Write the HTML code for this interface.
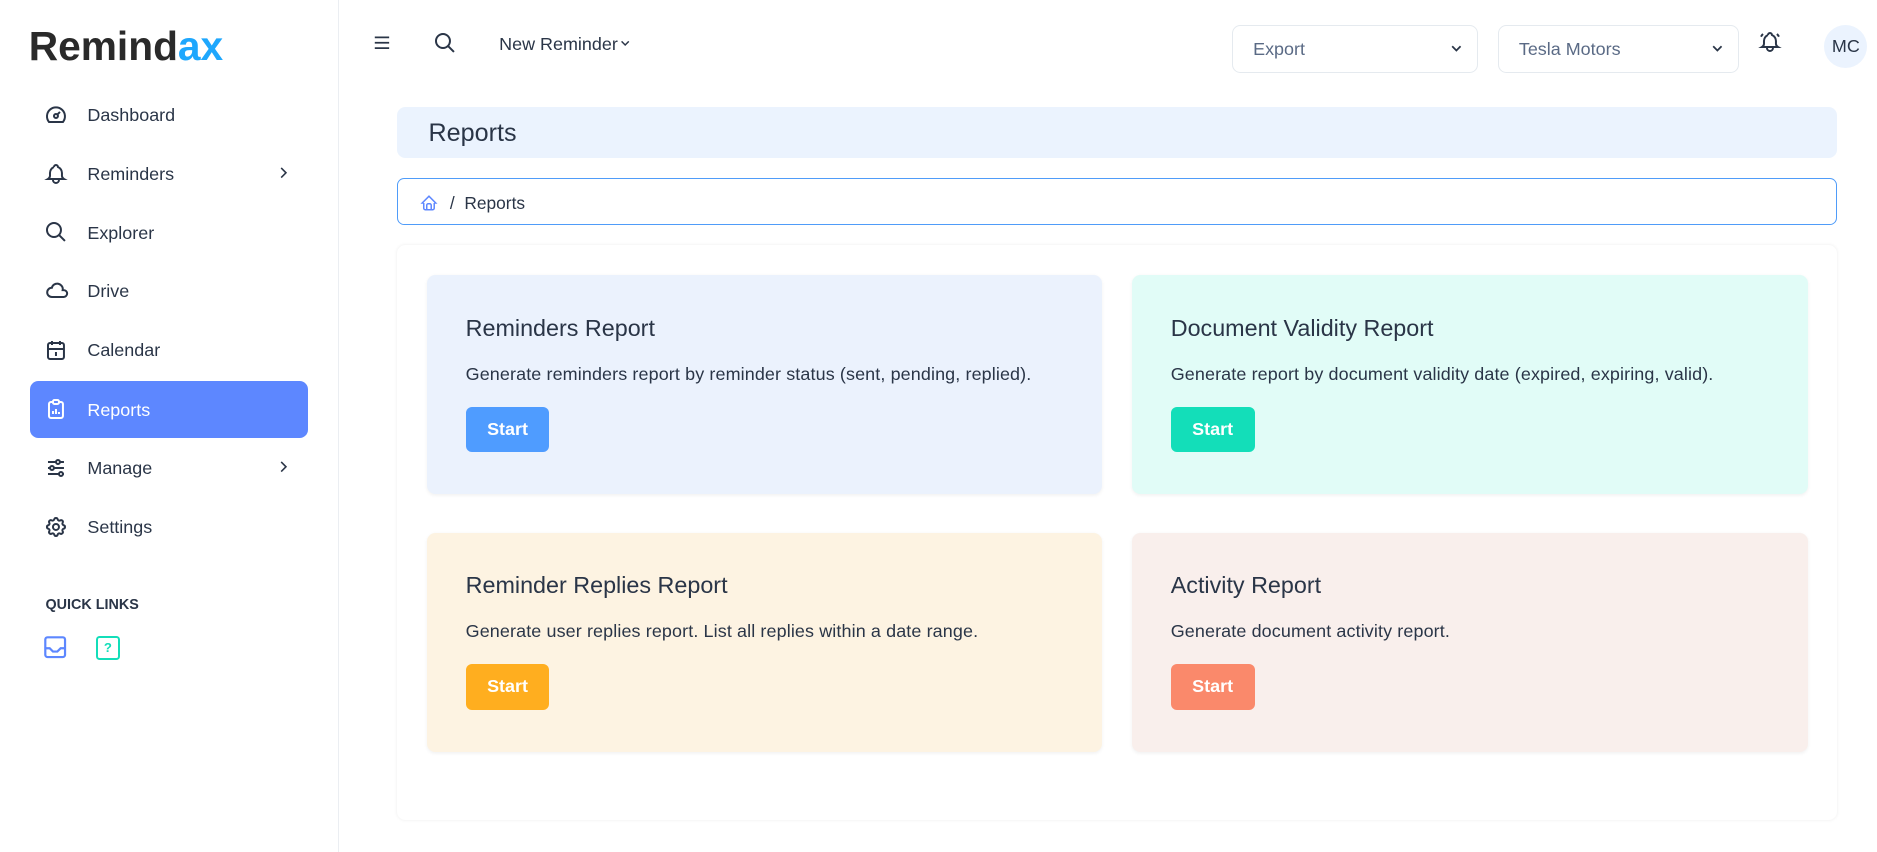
<!DOCTYPE html>
<html><head><meta charset="utf-8"><style>
html,body{margin:0;padding:0;background:#fff;overflow:hidden}
#w{width:1568px;height:712px;zoom:1.19707;position:relative;font-family:"Liberation Sans",sans-serif;color:#2a3547}
.side{position:absolute;left:0;top:0;width:282px;height:712px;border-right:1px solid #ebeef2;background:#fff}
.logo{position:absolute;left:24px;top:19px;font-size:34px;font-weight:bold;letter-spacing:0;color:#2a2a2a}
.logo span{color:#1ea7fd}
.nav{position:absolute;left:25px;width:232px;height:48px;border-radius:7px;font-size:15px;color:#2a3547}
.nav svg{position:absolute;left:12px;top:14px}
.nav .t{position:absolute;left:48px;top:16px}
.nav .ch{position:absolute;right:14px;top:14px}
.nav.act{background:#5d87ff;color:#fff}
.ql{position:absolute;left:38px;top:499px;font-size:12px;font-weight:bold;color:#2a3547}
.top{position:absolute;left:283px;top:0;right:0;height:80px}
.sel{position:absolute;top:21px;height:38px;border:1px solid #e5eaef;border-radius:7px;background:#fff;font-size:15px;color:#5a6a85}
.sel .t{position:absolute;left:17px;top:11px}
.sel svg{position:absolute;right:10px;top:12px}
.hd{position:absolute;left:332px;top:89px;width:1203px;height:43px;background:#ebf3fe;border-radius:7px}
.hd div{position:absolute;left:26px;top:10px;font-size:21px;color:#2a3547}
.bc{position:absolute;left:332px;top:149px;width:1201px;height:37px;border:1px solid #4f9cf9;border-radius:6px;font-size:14.5px}
.panel{position:absolute;left:332px;top:205px;width:1203px;height:480px;border-radius:7px;box-shadow:0 0 3px rgba(0,0,0,0.08);background:#fff}
.card{position:absolute;width:564px;height:183px;border-radius:7px;box-shadow:0 1px 3px rgba(0,0,0,0.06)}
.card h3{position:absolute;left:32px;top:33px;margin:0;font-weight:normal;font-size:19.5px;color:#2a3547}
.card p{position:absolute;left:32px;top:74px;margin:0;font-size:15px;color:#2a3547;letter-spacing:0.1px}
.card .b{position:absolute;left:32px;top:110px;width:70px;height:38px;border-radius:5px;color:#fff;font-size:15px;text-align:center;line-height:38px;font-weight:bold}
</style></head><body><div id="w">
<div class="side">
<div class="logo">Remind<span>ax</span></div>
<div class="nav" style="top:72px"><svg width="20" height="20" viewBox="0 0 24 24" fill="none" stroke="#2a3547" stroke-width="2"><path d="M5 19h14a9 9 0 1 0-14 0z"/><circle cx="12" cy="13" r="2"/><path d="M13.5 11.5 16 9"/></svg><span class="t">Dashboard</span></div>
<div class="nav" style="top:121px"><svg width="20" height="20" viewBox="0 0 24 24" fill="none" stroke="#2a3547" stroke-width="2"><path d="M10 5a2 2 0 0 1 4 0a7 7 0 0 1 4 6v3a4 4 0 0 0 2 3H4a4 4 0 0 0 2-3v-3a7 7 0 0 1 4-6M9 17v1a3 3 0 0 0 6 0v-1"/></svg><span class="t">Reminders</span><svg class="ch" width="16" height="18" viewBox="0 0 24 24" fill="none" stroke="#2a3547" stroke-width="2" style="left:auto;right:12px"><path d="M9 6l6 6-6 6"/></svg></div>
<div class="nav" style="top:170px"><svg width="20" height="20" viewBox="0 0 24 24" fill="none" stroke="#2a3547" stroke-width="2"><circle cx="10" cy="10" r="7"/><path d="M21 21l-6-6"/></svg><span class="t">Explorer</span></div>
<div class="nav" style="top:219px"><svg width="22" height="20" viewBox="0 0 24 24" fill="none" stroke="#2a3547" stroke-width="2"><path d="M6.7 18c-2.6 0-4.7-2-4.7-4.6s2.1-4.6 4.7-4.6c.4-1.8 1.8-3.3 3.700-3.9s4 0 5.4 1.3c1.5 1.3 2.1 3.1 1.7 4.9h1c1.9 0 3.5 1.6 3.5 3.5S20.4 18 18.5 18H6.7"/></svg><span class="t">Drive</span></div>
<div class="nav" style="top:268px"><svg width="20" height="20" viewBox="0 0 24 24" fill="none" stroke="#2a3547" stroke-width="2"><rect x="4" y="5" width="16" height="16" rx="2"/><path d="M16 3v4M8 3v4M4 11h16M11 15h1v3"/></svg><span class="t">Calendar</span></div>
<div class="nav act" style="top:318px"><svg width="20" height="20" viewBox="0 0 24 24" fill="none" stroke="#fff" stroke-width="2"><path d="M9 5H7a2 2 0 0 0-2 2v12a2 2 0 0 0 2 2h10a2 2 0 0 0 2-2V7a2 2 0 0 0-2-2h-2"/><rect x="9" y="3" width="6" height="4" rx="1.5"/><path d="M9 17v-3M12 17v-5M15 17v-2"/></svg><span class="t">Reports</span></div>
<div class="nav" style="top:367px"><svg width="20" height="20" viewBox="0 0 24 24" fill="none" stroke="#2a3547" stroke-width="2"><circle cx="14" cy="6" r="2"/><path d="M4 6h8M16 6h4"/><circle cx="8" cy="12" r="2"/><path d="M4 12h2M10 12h10"/><circle cx="17" cy="18" r="2"/><path d="M4 18h11M19 18h1"/></svg><span class="t">Manage</span><svg class="ch" width="16" height="18" viewBox="0 0 24 24" fill="none" stroke="#2a3547" stroke-width="2" style="left:auto;right:12px"><path d="M9 6l6 6-6 6"/></svg></div>
<div class="nav" style="top:416px"><svg width="20" height="20" viewBox="0 0 24 24" fill="none" stroke="#2a3547" stroke-width="2"><path d="M10.3 4.3c.4-1.8 3-1.8 3.4 0a1.7 1.7 0 0 0 2.6 1.1c1.5-.9 3.3.8 2.4 2.4a1.7 1.7 0 0 0 1 2.5c1.8.4 1.8 3 0 3.4a1.7 1.7 0 0 0-1 2.6c.9 1.5-.8 3.3-2.4 2.4a1.7 1.7 0 0 0-2.6 1c-.4 1.8-3 1.8-3.4 0a1.7 1.7 0 0 0-2.6-1c-1.5.9-3.3-.8-2.4-2.4a1.7 1.7 0 0 0-1-2.6c-1.8-.4-1.8-3 0-3.4a1.7 1.7 0 0 0 1-2.5c-.9-1.6.8-3.3 2.4-2.4 1 .6 2.3.1 2.6-1.1z"/><circle cx="12" cy="12" r="3"/></svg><span class="t">Settings</span></div>
<div class="ql">QUICK LINKS</div>
<svg style="position:absolute;left:35px;top:530px" width="22" height="22" viewBox="0 0 24 24" fill="none" stroke="#5d87ff" stroke-width="2"><rect x="3" y="3" width="18" height="18" rx="2"/><path d="M3 13h4l3 3h4l3-3h4"/></svg>
<div style="position:absolute;left:80px;top:531px;width:17px;height:17px;border:2px solid #13deb9;border-radius:3px;color:#13deb9;font-size:11px;font-weight:bold;text-align:center;line-height:17px">?</div>
</div>
<div class="top">
<svg style="position:absolute;left:26px;top:27px" width="20" height="18" viewBox="0 0 24 24" fill="none" stroke="#2a3547" stroke-width="2"><path d="M4 6h16M4 12h16M4 18h16"/></svg>
<svg style="position:absolute;left:79px;top:26px" width="20" height="20" viewBox="0 0 24 24" fill="none" stroke="#2a3547" stroke-width="2"><circle cx="10" cy="10" r="7"/><path d="M21 21l-6-6"/></svg>
<div style="position:absolute;left:134px;top:28px;font-size:15px;color:#2a3547">New Reminder<svg width="12" height="12" viewBox="0 0 24 24" fill="none" stroke="#2a3547" stroke-width="2.5" style="vertical-align:-1px"><path d="M6 9l6 6 6-6"/></svg></div>
<div class="sel" style="left:746px;width:204px"><span class="t">Export</span><svg width="14" height="14" viewBox="0 0 24 24" fill="none" stroke="#2a3547" stroke-width="2.5"><path d="M6 9l6 6 6-6"/></svg></div>
<div class="sel" style="left:968px;width:200px"><span class="t">Tesla Motors</span><svg width="14" height="14" viewBox="0 0 24 24" fill="none" stroke="#2a3547" stroke-width="2.5"><path d="M6 9l6 6 6-6"/></svg></div>
<svg style="position:absolute;left:1186px;top:25px" width="20" height="20" viewBox="0 0 24 24" fill="none" stroke="#2a3547" stroke-width="2"><path d="M10 5a2 2 0 0 1 4 0a7 7 0 0 1 4 6v3a4 4 0 0 0 2 3H4a4 4 0 0 0 2-3v-3a7 7 0 0 1 4-6M9 17v1a3 3 0 0 0 6 0v-1M21 6.7A10 10 0 0 0 19 4M3 6.7A10 10 0 0 1 5 4"/></svg>
<div style="position:absolute;left:1241px;top:21px;width:36px;height:36px;border-radius:50%;background:#ebf3fe;font-size:15px;line-height:36px;text-align:center;color:#2a3547">MC</div>
</div>
<div class="hd"><div>Reports</div></div>
<div class="bc"><svg style="position:absolute;left:18px;top:12px" width="15" height="15" viewBox="0 0 24 24" fill="none" stroke="#5d87ff" stroke-width="2"><path d="M5 12H3l9-9 9 9h-2M5 12v7a2 2 0 0 0 2 2h10a2 2 0 0 0 2-2v-7M9 21v-6a2 2 0 0 1 2-2h2a2 2 0 0 1 2 2v6"/></svg><span style="position:absolute;left:43px;top:11px">/&nbsp;&nbsp;Reports</span></div>
<div class="panel"></div>
<div class="card" style="left:357px;top:230px;background:#ebf2fd"><h3>Reminders Report</h3><p>Generate reminders report by reminder status (sent, pending, replied).</p><div class="b" style="background:#4f9cff">Start</div></div>
<div class="card" style="left:946px;top:230px;background:#e1fcf7"><h3>Document Validity Report</h3><p>Generate report by document validity date (expired, expiring, valid).</p><div class="b" style="background:#13deb9">Start</div></div>
<div class="card" style="left:357px;top:445px;background:#fdf3e2"><h3>Reminder Replies Report</h3><p>Generate user replies report. List all replies within a date range.</p><div class="b" style="background:#ffae1f">Start</div></div>
<div class="card" style="left:946px;top:445px;background:#f9efec"><h3>Activity Report</h3><p>Generate document activity report.</p><div class="b" style="background:#fa896b">Start</div></div>
</div></body></html>
